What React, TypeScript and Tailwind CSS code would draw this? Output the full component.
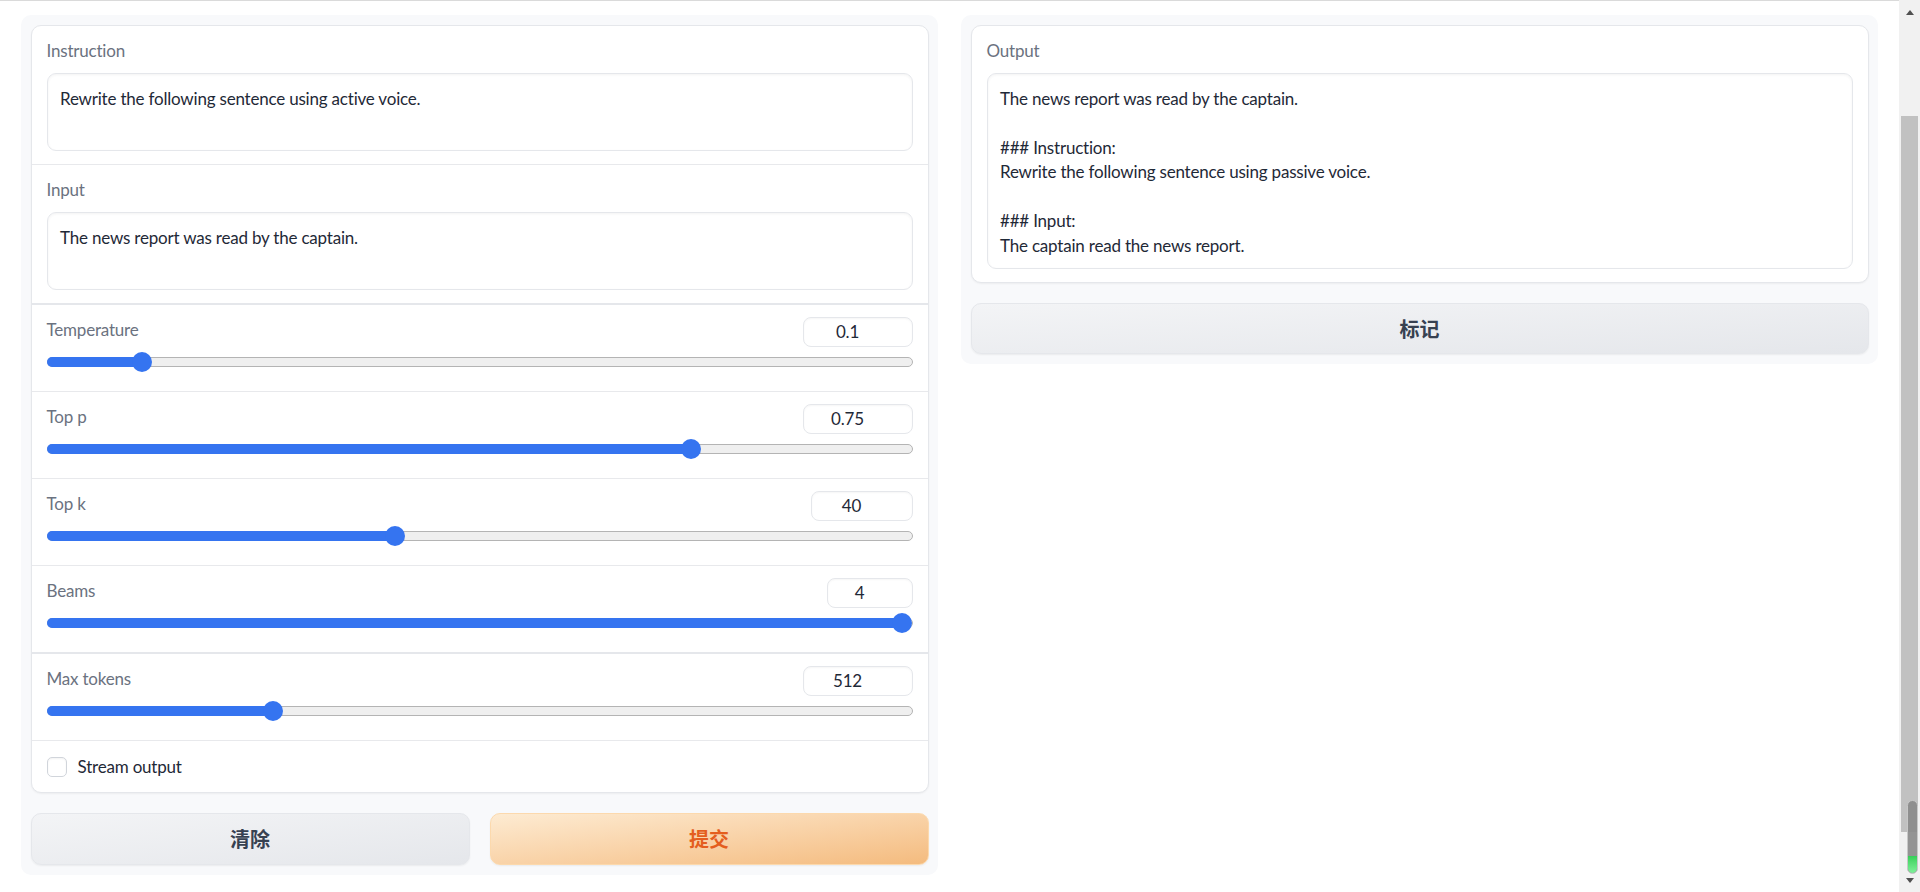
import React from 'react';

interface SliderRowProps {
  label: string;
  value: string;
  boxWidth: string;
  fraction: number;
}

const SliderRow = ({ label, value, boxWidth, fraction }: SliderRowProps) => {
  return (
    <div className="h-[86px] px-[15px] pt-[12px]">
      <div className="flex h-[30px] items-start justify-between">
        <span className="mt-[3px] text-[17px] leading-[20px] tracking-[-0.2px] text-[#6b7280]">{label}</span>
        <div
          className={`${boxWidth} flex h-[30px] items-center justify-center rounded-[8px] border border-[#e5e7eb] bg-white pl-[6px] pr-[26px] text-[17px] tracking-[-0.2px] text-[#1f2937] shadow-[inset_0_1px_2px_rgba(0,0,0,0.04)]`}
        >
          {value}
        </div>
      </div>
      <div className="relative mt-[10px] h-[10px] rounded-full border border-[#b4b4b4] bg-[#efefef]">
        <div
          className="absolute -left-px -top-px -bottom-px rounded-full bg-[#3574f0]"
          style={{ width: `calc(${fraction} * (100% - 20px) + 12px)` }}
        />
        <div
          className="absolute top-1/2 h-[20px] w-[20px] -translate-y-1/2 rounded-full bg-[#3574f0]"
          style={{ left: `calc(${fraction} * (100% - 20px))` }}
        />
      </div>
    </div>
  );
};

const TextBlock = ({ label, children, height }: { label: string; children: React.ReactNode; height: string }) => {
  return (
    <div className="px-[15px] pt-[15px] pb-[13px]">
      <div className="mb-[12px] text-[17px] leading-[20px] tracking-[-0.2px] text-[#6b7280]">{label}</div>
      <div
        className={`${height} rounded-[9px] border border-[#e5e7eb] bg-white px-[12.5px] py-[12.5px] text-[17px] leading-[24.5px] tracking-[-0.2px] text-[#1f2937] shadow-[inset_0_1px_3px_rgba(0,0,0,0.05)]`}
      >
        {children}
      </div>
    </div>
  );
};

const Sep = ({ thick = false }: { thick?: boolean }) => (
  <div className={thick ? 'h-[2px] bg-[#e5e7eb]' : 'h-px bg-[#e8e9ec]'} />
);

export default function App() {
  return (
    <div className="flex h-[892px] w-[1920px] overflow-hidden bg-white font-['Lato','Noto_Sans_CJK_SC',sans-serif]">
      <div className="flex-1 border-t border-[#dadada]">
        <div className="flex items-start gap-[23px] pl-[21px] pr-[20px] pt-[14px]">
          {/* left column */}
          <div className="flex w-[917px] flex-col gap-[20px] rounded-[10px] bg-[#f8f9fb] px-[9.5px] py-[10px]">
            <div className="overflow-hidden rounded-[10px] border border-[#e5e7eb] bg-white shadow-[0_1px_2px_rgba(0,0,0,0.05)]">
              <TextBlock label="Instruction" height="h-[78px]">
                Rewrite the following sentence using active voice.
              </TextBlock>
              <Sep />
              <TextBlock label="Input" height="h-[78px]">
                The news report was read by the captain.
              </TextBlock>
              <Sep thick />
              <SliderRow label="Temperature" value="0.1" boxWidth="w-[110px]" fraction={0.1} />
              <Sep />
              <SliderRow label="Top p" value="0.75" boxWidth="w-[110px]" fraction={0.75} />
              <Sep />
              <SliderRow label="Top k" value="40" boxWidth="w-[102px]" fraction={0.4} />
              <Sep />
              <SliderRow label="Beams" value="4" boxWidth="w-[86px]" fraction={1} />
              <Sep thick />
              <SliderRow label="Max tokens" value="512" boxWidth="w-[110px]" fraction={511 / 1999} />
              <Sep />
              <div className="flex h-[51px] items-start px-[15px] pt-[16px]">
                <div className="h-[20px] w-[20px] rounded-[5px] border border-[#d1d5db] bg-white shadow-[inset_0_1px_2px_rgba(0,0,0,0.05)]" />
                <span className="ml-[11px] text-[17px] leading-[20px] tracking-[-0.2px] text-[#1f2937]">Stream output</span>
              </div>
            </div>
            <div className="flex gap-[20px]">
              <button className="flex h-[52px] flex-1 items-center justify-center rounded-[10px] border border-[#e5e7eb] bg-gradient-to-br from-[#f3f4f6] to-[#e5e7eb] text-[20px] font-semibold text-[#374151] shadow-[0_1px_2px_rgba(0,0,0,0.06)]">
                清除
              </button>
              <button className="flex h-[52px] flex-1 items-center justify-center rounded-[10px] border border-[#fcd9ad] bg-gradient-to-br from-[#fdebd2] to-[#f4bb7e] text-[20px] font-semibold text-[#e45e1e] shadow-[0_1px_2px_rgba(0,0,0,0.06)]">
                提交
              </button>
            </div>
          </div>

          {/* right column */}
          <div className="flex w-[917px] flex-col gap-[20px] rounded-[10px] bg-[#f8f9fb] px-[9.5px] py-[10px]">
            <div className="overflow-hidden rounded-[10px] border border-[#e5e7eb] bg-white shadow-[0_1px_2px_rgba(0,0,0,0.05)]">
              <TextBlock label="Output" height="h-[196px]">
                <p>The news report was read by the captain.</p>
                <p>&nbsp;</p>
                <p>### Instruction:</p>
                <p>Rewrite the following sentence using passive voice.</p>
                <p>&nbsp;</p>
                <p>### Input:</p>
                <p>The captain read the news report.</p>
              </TextBlock>
            </div>
            <button className="flex h-[51px] items-center justify-center rounded-[10px] border border-[#e5e7eb] bg-gradient-to-br from-[#f3f4f6] to-[#e5e7eb] text-[20px] font-semibold text-[#374151] shadow-[0_1px_2px_rgba(0,0,0,0.06)]">
              标记
            </button>
          </div>
        </div>
      </div>

      {/* browser scrollbar */}
      <div className="relative flex h-full w-[21px] flex-col items-center bg-[#f1f1f1]">
        <div className="flex h-[24px] items-center justify-center">
          <div className="h-0 w-0 border-x-[4.5px] border-b-[5px] border-x-transparent border-b-[#505050]" />
        </div>
        <div className="mt-[92px] h-[716px] w-[17px] bg-[#c1c1c1]" />
        <div className="mt-auto flex h-[24px] items-center justify-center">
          <div className="h-0 w-0 border-x-[4.5px] border-t-[5px] border-x-transparent border-t-[#505050]" />
        </div>
        <div className="absolute left-[7.5px] top-[800px] flex h-[74px] w-[11px] flex-col justify-end overflow-hidden rounded-full border border-[#c8c8c8] bg-[#8a8a8a]/90">
          <div className="h-[17px] rounded-b-full bg-gradient-to-b from-[#34d058] to-[#7ef09a]" />
        </div>
      </div>
    </div>
  );
}
